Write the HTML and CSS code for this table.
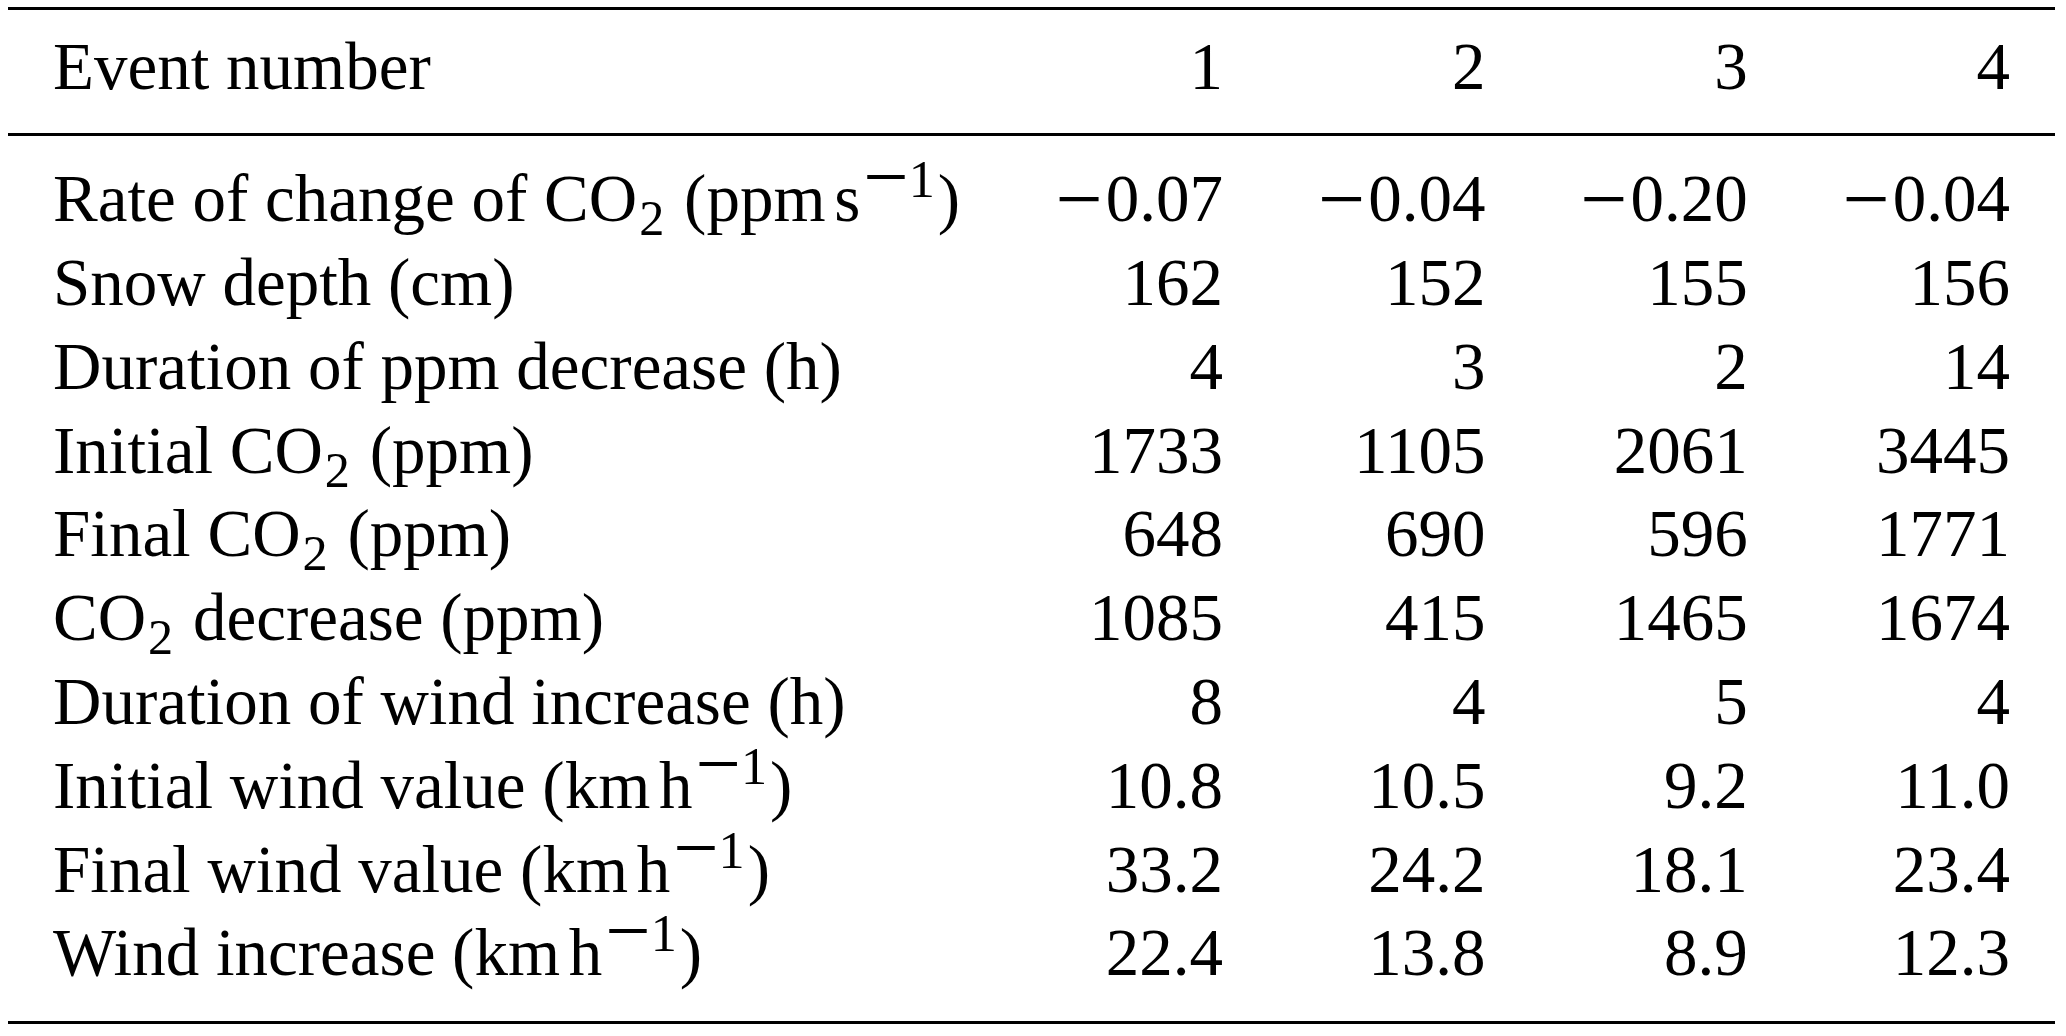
FILE: index.html
```html
<!DOCTYPE html>
<html lang="en">
<head>
<meta charset="utf-8">
<title>Event table</title>
<link rel="stylesheet" href="styles.css">
</head>
<body>
<table class="events">
  <colgroup>
    <col class="col-label">
    <col class="col-num">
    <col class="col-num">
    <col class="col-num">
    <col class="col-last">
  </colgroup>
  <thead>
    <tr>
      <th class="label">Event number</th>
      <th>1</th>
      <th>2</th>
      <th>3</th>
      <th class="last">4</th>
    </tr>
  </thead>
  <tbody>
    <tr class="first">
      <td class="label">Rate of change of CO<span class="sub">2</span> (ppm<span class="unit">s</span><span class="sup"><span class="mminus">−</span>1</span>)</td>
      <td><span class="minus">−</span>0.07</td>
      <td><span class="minus">−</span>0.04</td>
      <td><span class="minus">−</span>0.20</td>
      <td class="last"><span class="minus">−</span>0.04</td>
    </tr>
    <tr>
      <td class="label">Snow depth (cm)</td>
      <td>162</td><td>152</td><td>155</td><td class="last">156</td>
    </tr>
    <tr>
      <td class="label">Duration of ppm decrease (h)</td>
      <td>4</td><td>3</td><td>2</td><td class="last">14</td>
    </tr>
    <tr>
      <td class="label">Initial CO<span class="sub">2</span> (ppm)</td>
      <td>1733</td><td>1105</td><td>2061</td><td class="last">3445</td>
    </tr>
    <tr>
      <td class="label">Final CO<span class="sub">2</span> (ppm)</td>
      <td>648</td><td>690</td><td>596</td><td class="last">1771</td>
    </tr>
    <tr>
      <td class="label">CO<span class="sub">2</span> decrease (ppm)</td>
      <td>1085</td><td>415</td><td>1465</td><td class="last">1674</td>
    </tr>
    <tr>
      <td class="label">Duration of wind increase (h)</td>
      <td>8</td><td>4</td><td>5</td><td class="last">4</td>
    </tr>
    <tr>
      <td class="label">Initial wind value (km<span class="unit">h</span><span class="sup"><span class="mminus">−</span>1</span>)</td>
      <td>10.8</td><td>10.5</td><td>9.2</td><td class="last">11.0</td>
    </tr>
    <tr>
      <td class="label">Final wind value (km<span class="unit">h</span><span class="sup"><span class="mminus">−</span>1</span>)</td>
      <td>33.2</td><td>24.2</td><td>18.1</td><td class="last">23.4</td>
    </tr>
    <tr class="end">
      <td class="label">Wind increase (km<span class="unit">h</span><span class="sup"><span class="mminus">−</span>1</span>)</td>
      <td>22.4</td><td>13.8</td><td>8.9</td><td class="last">12.3</td>
    </tr>
  </tbody>
</table>
</body>
</html>
```

FILE: styles.css
```css
html, body {
  margin: 0;
  padding: 0;
  background: #ffffff;
}

body {
  font-family: "Liberation Serif", "Times New Roman", serif;
  font-size: 67px;
  line-height: 83.8px;
  color: #000000;
}

.events {
  margin: 7px 0 0 8px;
  width: 2047px;
  table-layout: fixed;
  border-collapse: separate;
  border-spacing: 0;
  border-top: 3px solid #000000;
  border-bottom: 3px solid #000000;
}

.col-label { width: 952.8px; }
.col-num { width: 262.3px; }
.col-last { width: 307.3px; }

.events th,
.events td {
  padding: 0;
  font-weight: normal;
  text-align: right;
  vertical-align: baseline;
  white-space: nowrap;
}

.events .label {
  text-align: left;
  padding-left: 45px;
}

.events .last {
  padding-right: 45px;
}

.events thead th {
  padding-top: 14.7px;
  padding-bottom: 25px;
  border-bottom: 3px solid #000000;
}

.events tbody tr.first td {
  padding-top: 20.7px;
}

.events tbody tr.end td {
  padding-bottom: 25.5px;
}

.sub {
  font-size: 0.75em;
  vertical-align: -14px;
  line-height: 0;
  margin-left: 2px;
  margin-right: 3px;
}

.sup {
  font-size: 0.78em;
  vertical-align: 24px;
  line-height: 0;
  margin-right: 3px;
}

.unit {
  margin-left: 0.13em;
}

.minus {
  font-size: 1.25em;
  line-height: 0;
  vertical-align: -6px;
  margin-right: 3px;
}

.mminus {
  font-size: 1.54em;
  line-height: 0;
  vertical-align: -7px;
  margin-left: 3px;
}
```
